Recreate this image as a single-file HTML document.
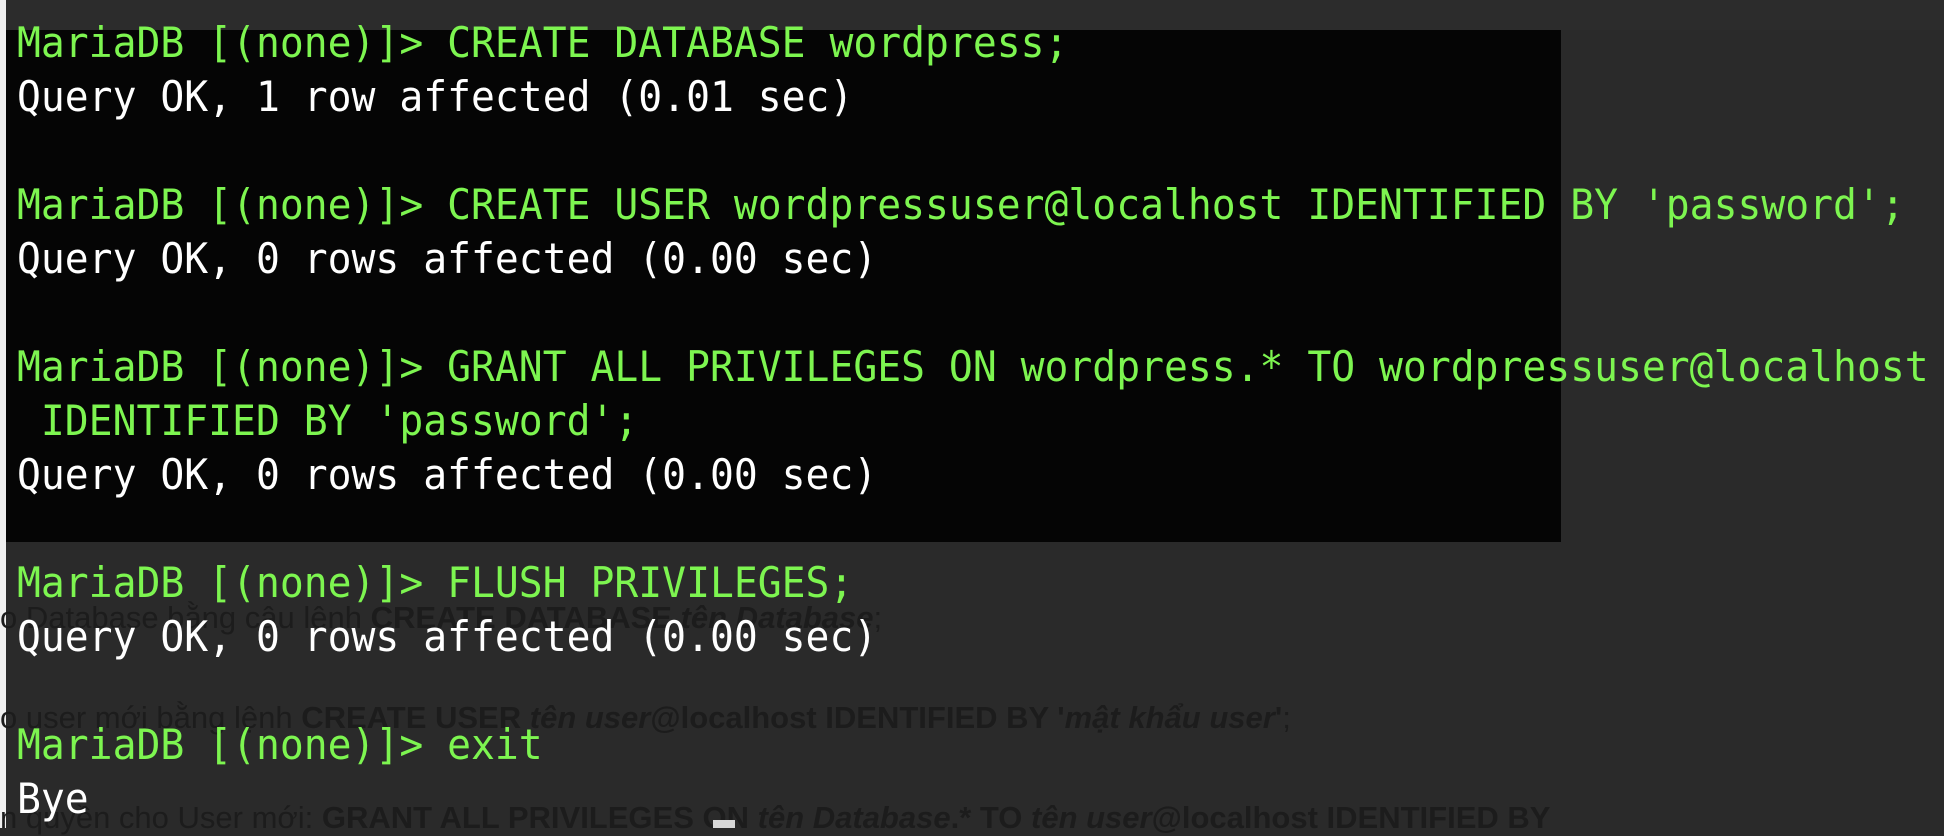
<!DOCTYPE html>
<html><head><meta charset="utf-8"><style>
html,body{margin:0;padding:0;}
body{width:1944px;height:828px;background:#2a2a2a;position:relative;overflow:hidden;}
.strip{position:absolute;left:0;top:0;width:6px;height:828px;background:#f0f0f0;}
.topbar{position:absolute;left:6px;top:0;width:1938px;height:30px;background:#2c2c2c;}
.black{position:absolute;left:6px;top:30px;width:1555px;height:512px;background:#050505;}
.ghost{position:absolute;left:0;font-family:"Liberation Sans",sans-serif;font-size:31px;color:#1c1c1c;white-space:pre;}
pre{position:absolute;left:17px;top:16px;margin:0;font-family:"DejaVu Sans Mono",monospace;font-size:42px;letter-spacing:0;line-height:54px;color:#fff;transform:scaleX(0.945);transform-origin:0 0;}
.g{color:#7df550;}
.cur{position:absolute;left:713px;top:820px;width:22px;height:8px;background:#d8d8d8;}
</style></head><body>
<div class="strip"></div>
<div class="topbar"></div>
<div class="black"></div>
<div class="ghost" style="top:600px">o Database bằng câu lệnh <b>CREATE DATABASE <i>tên Database</i></b>;</div>
<div class="ghost" style="top:700px">o user mới bằng lệnh <b>CREATE USER <i>tên user</i>@localhost IDENTIFIED BY '<i>mật khẩu user</i>'</b>;</div>
<div class="ghost" style="top:800px">n quyền cho User mới: <b>GRANT ALL PRIVILEGES ON <i>tên Database</i>.* TO <i>tên user</i>@localhost IDENTIFIED BY</b></div>
<pre><span class="g">MariaDB [(none)]&gt; CREATE DATABASE wordpress;</span>
Query OK, 1 row affected (0.01 sec)

<span class="g">MariaDB [(none)]&gt; CREATE USER wordpressuser@localhost IDENTIFIED BY 'password';</span>
Query OK, 0 rows affected (0.00 sec)

<span class="g">MariaDB [(none)]&gt; GRANT ALL PRIVILEGES ON wordpress.* TO wordpressuser@localhost</span>
<span class="g"> IDENTIFIED BY 'password';</span>
Query OK, 0 rows affected (0.00 sec)

<span class="g">MariaDB [(none)]&gt; FLUSH PRIVILEGES;</span>
Query OK, 0 rows affected (0.00 sec)

<span class="g">MariaDB [(none)]&gt; exit</span>
Bye</pre>
<div class="cur"></div>
</body></html>
